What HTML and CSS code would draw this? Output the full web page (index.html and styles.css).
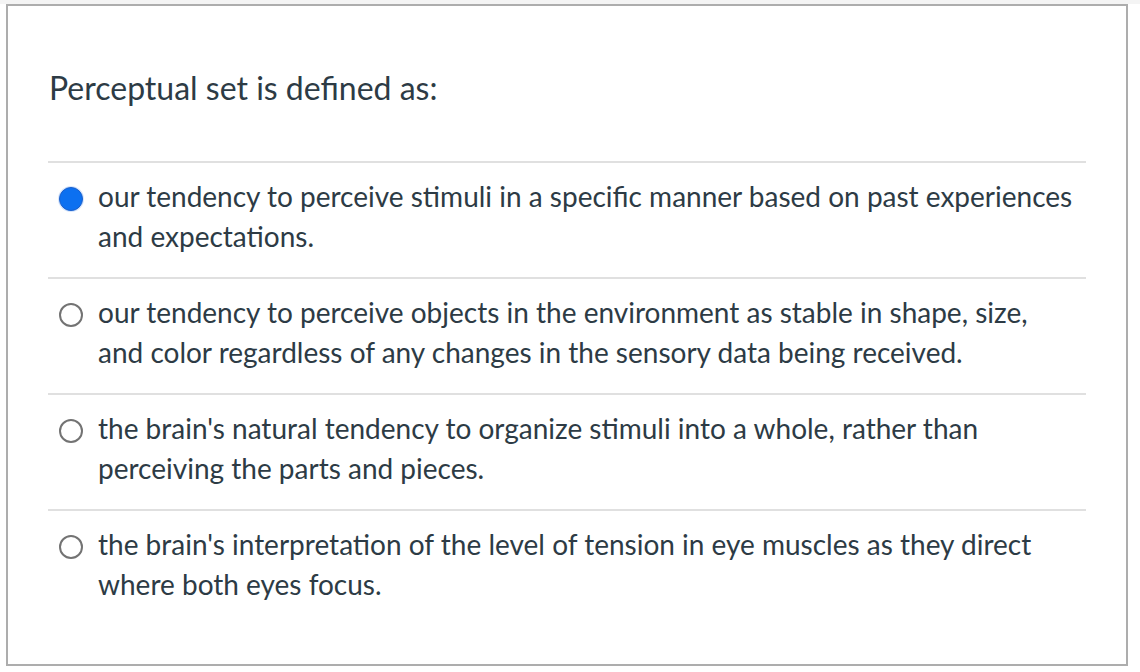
FILE: index.html
```html
<!DOCTYPE html>
<html>
<head>
<meta charset="utf-8">
<link rel="stylesheet" href="styles.css">
</head>
<body>
<div class="topstrip"></div>
<div class="question">
  <div class="question-text">Perceptual set is defined as:</div>
  <div class="answers">
    <div class="answer">
      <span class="radio checked"></span>
      <div class="answer-text">our tendency to perceive stimuli in a specific manner based on past experiences and expectations.</div>
    </div>
    <div class="answer">
      <span class="radio"></span>
      <div class="answer-text">our tendency to perceive objects in the environment as stable in shape, size, and color regardless of any changes in the sensory data being received.</div>
    </div>
    <div class="answer">
      <span class="radio"></span>
      <div class="answer-text">the brain's natural tendency to organize stimuli into a whole, rather than perceiving the parts and pieces.</div>
    </div>
    <div class="answer">
      <span class="radio"></span>
      <div class="answer-text">the brain's interpretation of the level of tension in eye muscles as they direct where both eyes focus.</div>
    </div>
  </div>
</div>
</body>
</html>
```

FILE: styles.css
```css
html, body {
  margin: 0;
  padding: 0;
  background: #ffffff;
}
body {
  font-family: Lato, "Open Sans", sans-serif;
  color: #2d3b45;
  width: 1140px;
  height: 672px;
  overflow: hidden;
}
.topstrip {
  height: 4px;
  background: #f4f4f4;
}
.question {
  margin: 0 12px 0 6px;
  height: 658px;
  border: 2px solid #adadad;
  padding: 0 40px;
  box-sizing: content-box;
}
.question-text {
  font-size: 32px;
  line-height: 40px;
  padding-top: 62px;
  padding-bottom: 53px;
  padding-left: 1px;
}
.answers {
  display: flex;
  flex-direction: column;
}
.answer {
  display: flex;
  align-items: flex-start;
  gap: 15px;
  border-top: 2px solid #e0e0e0;
  padding: 13px 8px 21px 11px;
  height: 80px;
}
.answer-text {
  font-size: 28px;
  line-height: 40px;
  flex: 1;
}
.radio {
  flex: none;
  width: 24px;
  height: 24px;
  border-radius: 50%;
  box-sizing: border-box;
  border: 2px solid #737373;
  background: #fff;
  margin-top: 11px;
}
.radio.checked {
  background: #0c70f0;
  border: 1.5px solid #1a5fcc;
  box-shadow: 0 0 0 1px #d6e5fb;
}
```
